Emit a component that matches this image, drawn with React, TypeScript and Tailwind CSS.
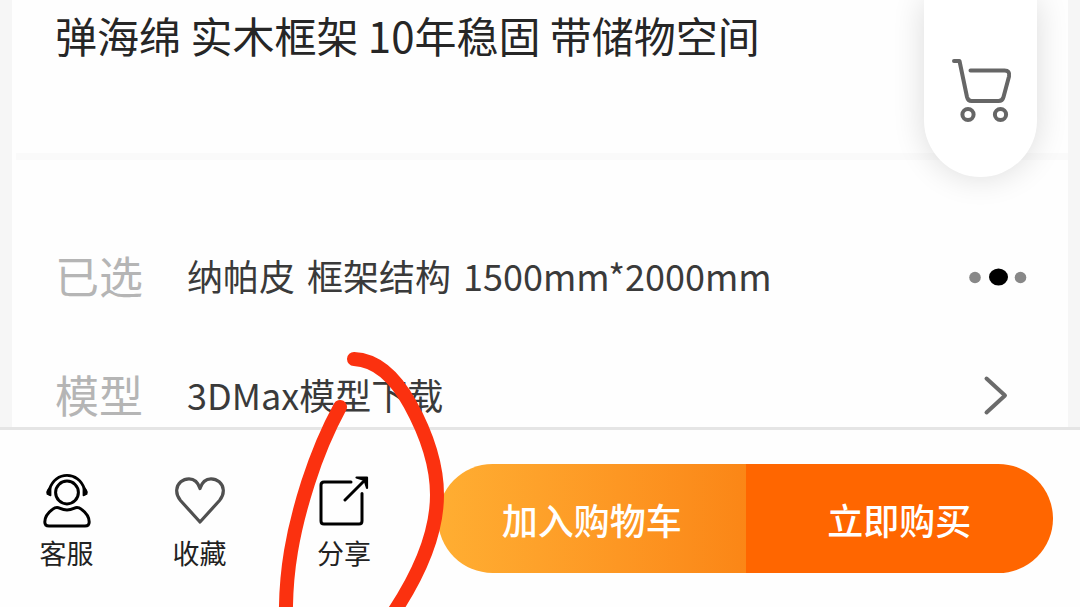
import type { ReactNode } from 'react'

function CartIcon() {
  return (
    <svg width="64" height="70" viewBox="0 0 64 70" fill="none" stroke="#666666" strokeLinecap="round" strokeLinejoin="round" aria-hidden="true">
      <path d="M5 5h5.500L18 41q1 4 4.500 4h27q4 0 5-4l5.500-20.500q1.200-6-4.500-6H21.500" strokeWidth="4" />
      <circle cx="19" cy="58.500" r="5.600" strokeWidth="4" />
      <circle cx="51.500" cy="58.500" r="5.600" strokeWidth="4" />
    </svg>
  )
}

function DotsIcon() {
  return (
    <svg width="58" height="44" viewBox="0 -4 58 44" aria-hidden="true">
      <circle cx="6" cy="20.500" r="5.800" fill="#888888" />
      <ellipse cx="29.500" cy="20" rx="9.500" ry="8.600" fill="#000000" />
      <circle cx="51.500" cy="20.500" r="5.800" fill="#888888" />
    </svg>
  )
}

function ChevronIcon() {
  return (
    <svg width="58" height="44" viewBox="0 -4 58 44" fill="none" stroke="#6b6b6b" strokeWidth="4" strokeLinecap="round" strokeLinejoin="round" aria-hidden="true">
      <path d="M17.500 2.500 36 19.500 17.500 36.500" />
    </svg>
  )
}

function ServiceIcon() {
  return (
    <svg width="56" height="56" viewBox="0 0 56 56" fill="none" stroke="#000000" strokeWidth="3" strokeLinecap="round" strokeLinejoin="round" aria-hidden="true">
      <circle cx="28" cy="20.500" r="11.400" />
      <path d="M10.500 17C13.500 8 20.500 3.300 28 3.300S42.500 8 45.500 17" strokeWidth="2.800" />
      <path d="M11.500 15.500v7.800l-3-1.300q-1-2 .5-4zM44.500 15.500v7.800l3-1.300q1-2-.5-4z" fill="#000000" strokeWidth="1.800" />
      <path d="M18 35.500q-2.200 0-4.200 1.600C8.500 41 5.800 45.500 5.800 50q0 4 4.200 4h36q4.200 0 4.200-4c0-4.500-2.700-9-8-12.900q-2-1.600-4.200-1.600c-3 0-4 2.500-10 2.500s-7-2.500-10-2.500z" />
    </svg>
  )
}

function HeartIcon() {
  return (
    <svg width="56" height="56" viewBox="0 0 56 56" fill="none" stroke="#505050" strokeWidth="3.200" strokeLinejoin="round" aria-hidden="true">
      <path d="M28 50 8.500 28.500C5.500 25 4.500 21.500 4.700 18 5.200 11 11 6.800 17 6.800c5.500 0 9 3.200 11 9.700C30 10 33.500 6.800 39 6.800c6 0 11.800 4.200 12.300 11.200.2 3.500-.8 7-3.800 10.500z" />
    </svg>
  )
}

function ShareIcon() {
  return (
    <svg width="56" height="56" viewBox="0 0 56 56" fill="none" stroke="#000000" strokeWidth="3" strokeLinecap="round" strokeLinejoin="round" aria-hidden="true">
      <path d="M35 10H8q-3 0-3 3v36q0 3 3 3h35q3 0 3-3V21.500M29 28 50 7" />
      <path d="M40.500 5.500h10.500v10.500L48.500 8z" fill="#000000" strokeWidth="2.200" />
    </svg>
  )
}

function SpecRow({ label, values, action, icon }: { label: string; values: string[]; action: string; icon: ReactNode }) {
  return (
    <div className="flex h-[119px] items-center">
      <span className="w-[132px] shrink-0 text-[44px] leading-[48px] text-[#b5b5b5]">{label}</span>
      <div className="flex flex-1 gap-3 text-[36px] leading-[48px] text-[#3a3a3a]">
        {values.map(value => <span key={value}>{value}</span>)}
      </div>
      <button type="button" aria-label={action}>{icon}</button>
    </div>
  )
}

const TABS = [
  { label: '客服', icon: <ServiceIcon />, width: 'w-[133px]' },
  { label: '收藏', icon: <HeartIcon />, width: 'w-[133px]' },
  { label: '分享', icon: <ShareIcon />, width: 'w-[156px]' },
]

export default function App() {
  return (
    <div className="relative flex h-screen flex-col overflow-hidden bg-[#f6f6f6] font-['Noto_Sans_CJK_SC',sans-serif]">
      <main className="mx-3 min-h-0 flex-1 bg-[#fefefe]">
        <section className="h-[153px] pt-[11px] pl-[43px]">
          <h1 className="text-[42px] leading-[48px] font-normal text-[#262626]">弹海绵 实木框架 10年稳固 带储物空间</h1>
        </section>
        <hr className="ml-1 h-[7px] border-0 bg-[#fafafa]" />
        <section className="pt-[55px] pr-[41px] pl-[43px]">
          <SpecRow label="已选" values={['纳帕皮', '框架结构', '1500mm*2000mm']} action="选择规格" icon={<DotsIcon />} />
          <SpecRow label="模型" values={['3DMax模型下载']} action="下载模型" icon={<ChevronIcon />} />
        </section>
      </main>

      <button
        type="button"
        aria-label="购物车"
        className="absolute top-0 right-[43px] flex h-[177px] w-[113px] justify-center rounded-b-full bg-white pt-14 shadow-[0_0_32px_rgba(0,0,0,0.14)]"
      >
        <CartIcon />
      </button>

      <footer className="relative flex h-[180px] shrink-0 items-start border-t-3 border-[#e5e5e5] bg-[#fefefe] pt-[34px] pr-[27px]">
        <nav className="flex pt-2">
          {TABS.map(({ label, icon, width }) => (
            <button key={label} type="button" className={`flex flex-col items-center gap-2 ${width}`}>
              {icon}
              <span className="text-[27px] leading-[34px] text-[#222222]">{label}</span>
            </button>
          ))}
        </nav>
        <div className="ml-4 flex h-[109px] flex-1 overflow-hidden rounded-full text-[36px] font-medium text-white">
          <button type="button" className="flex-1 bg-linear-to-r from-[#ffae32] to-[#fb8616]">加入购物车</button>
          <button type="button" className="flex-1 bg-[#ff6600]">立即购买</button>
        </div>
      </footer>

      {/* hand-drawn loop around the share button */}
      <svg
        className="pointer-events-none absolute bottom-0 left-[270px]"
        width="180"
        height="267"
        viewBox="0 0 180 267"
        fill="none"
        stroke="#fb310f"
        strokeWidth="14"
        strokeLinecap="round"
        aria-hidden="true"
      >
        <path d="M70 67C58 89 47 115 38 143C23 190 15 232 16 280" />
        <path d="M84 19C106 20 125 37 140 64C156 93 167 122 167 155C167 195 148 237 120 278" />
      </svg>
    </div>
  )
}
